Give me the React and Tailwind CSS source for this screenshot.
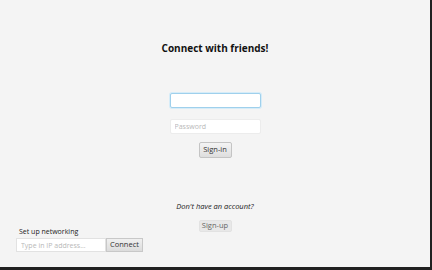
export default function App() {
  const font = { fontFamily: '"Open Sans", "Noto Sans", "DejaVu Sans", sans-serif' };
  return (
    <div className="w-[432px] h-[270px] bg-[#202020]" style={font}>
      <div className="w-[430px] h-[267px] bg-[#f4f4f4] flex flex-col">
        <div className="h-[227px] flex flex-col items-center">
          <div className="mt-[40px] h-[16px] leading-[16px] text-[10px] font-bold text-[#111]">
            Connect with friends!
          </div>
          <input
            className="mt-[37px] w-[91px] h-[15px] shrink-0 bg-white border border-[#9fd0ec] rounded-[2px] outline-none shadow-[0_0_0_1px_#d6ecf8]"
            defaultValue=""
          />
          <input
            className="mt-[11px] w-[91px] h-[15px] shrink-0 bg-white border border-[#ececec] rounded-[2px] outline-none px-[4px] text-[7px] text-[#888] placeholder:text-[#b8b8b8]"
            placeholder="Password"
          />
          <button className="mt-[8px] w-[33px] h-[16px] shrink-0 text-[7.5px] text-[#333] border border-[#c4c4c4] rounded-[2px] bg-gradient-to-b from-[#f4f4f4] to-[#dedede] leading-none">
            Sign-in
          </button>
          <div className="mt-[42px] h-[12px] shrink-0 leading-[12px] text-[7.5px] italic text-[#222]">
            Don't have an account?
          </div>
          <button className="mt-[8px] w-[33px] h-[12px] shrink-0 text-[7.5px] text-[#666] border border-[#e2e2e2] rounded-[2px] bg-[#e8e8e8] leading-none">
            Sign-up
          </button>
        </div>
        <div className="ml-[16px] flex flex-col">
          <div className="ml-[3px] h-[10px] leading-[10px] text-[7px] text-[#222]">Set up networking</div>
          <div className="mt-[1px] flex">
            <input
              className="w-[90px] h-[14px] bg-white border border-[#e2e2e2] outline-none px-[4px] text-[7px] placeholder:text-[#b8b8b8]"
              placeholder="Type in IP address..."
            />
            <button className="w-[37px] h-[14px] text-[7.5px] text-[#333] border border-[#c8c8c8] bg-gradient-to-b from-[#f0f0f0] to-[#dcdcdc] leading-none">
              Connect
            </button>
          </div>
        </div>
      </div>
    </div>
  );
}
